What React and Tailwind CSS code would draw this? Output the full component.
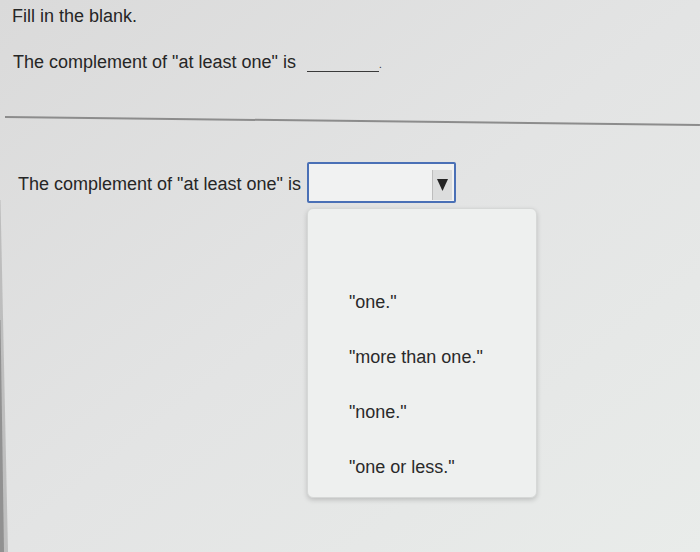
const options = ['"one."', '"more than one."', '"none."', '"one or less."'];

// Select box with a small down-triangle button on the right
const AnswerSelect = () => (
  <div className="relative">
    <div className="w-[149px] h-[41px] border-2 border-[#4a70b6] rounded-[2px] bg-[#f1f2f2] flex justify-end items-center pr-[2px]">
      <div className="w-[20px] h-[30px] mt-[4px] bg-[#dcdddd] border-l border-[#bdbdbd] flex items-center justify-center">
        <svg width="11" height="12" viewBox="0 0 11 12">
          <path d="M0 0 L11 0 L5.5 12 Z" fill="#242424" />
        </svg>
      </div>
    </div>

    {/* open option list */}
    <div className="absolute left-0 top-[46px] w-[230px] h-[290px] rounded-[6px] bg-[#eef0ef] border border-[#d6d8d7] shadow-[0_2px_5px_rgba(0,0,0,0.18)] pt-[81px] pl-[41px] flex flex-col gap-[31px]">
      {options.map((opt) => (
        <div key={opt} className="text-[18px] leading-[24px] text-[#2a2a2a]">
          {opt}
        </div>
      ))}
    </div>
  </div>
);

export default function App() {
  return (
    <div
      className="relative w-[700px] h-[552px] overflow-hidden bg-gradient-to-br from-[#dadada] via-[#e3e4e4] to-[#e9ecea] text-[#262626]"
      style={{ fontFamily: '"Liberation Sans", Arial, sans-serif' }}
    >
      <div className="pl-[12px] pt-[4px]">
        <p className="text-[18px] leading-[24px]">Fill in the blank.</p>
        <p className="mt-[20px] text-[18px] leading-[24px] pl-[1px]">
          The complement of "at least one" is{" "}
          <span className="inline-block w-[72px] h-[20px] align-baseline border-b border-[#3a3a3a] ml-[6px] translate-y-[4px]" />
          <span className="text-[10px]">.</span>
        </p>
      </div>

      <div className="mt-[39px] ml-[5px] h-[2px] bg-[#8c8c8c] origin-left rotate-[0.66deg]" />

      <div className="mt-[44px] pl-[18px] flex items-center gap-[6px]">
        <span className="text-[18px] leading-[24px] mt-[2px]">The complement of "at least one" is</span>
        <AnswerSelect />
      </div>

      {/* darker bezel edge along the left side */}
      <svg className="absolute left-0 top-0 pointer-events-none" width="12" height="552" viewBox="0 0 12 552">
        <polygon points="0,200 0.5,200 8,552 0,552" fill="#a6a6a6" opacity="0.6" />
        <polygon points="0,320 0.5,320 4,552 0,552" fill="#7d7d7d" opacity="0.7" />
      </svg>
    </div>
  );
}
